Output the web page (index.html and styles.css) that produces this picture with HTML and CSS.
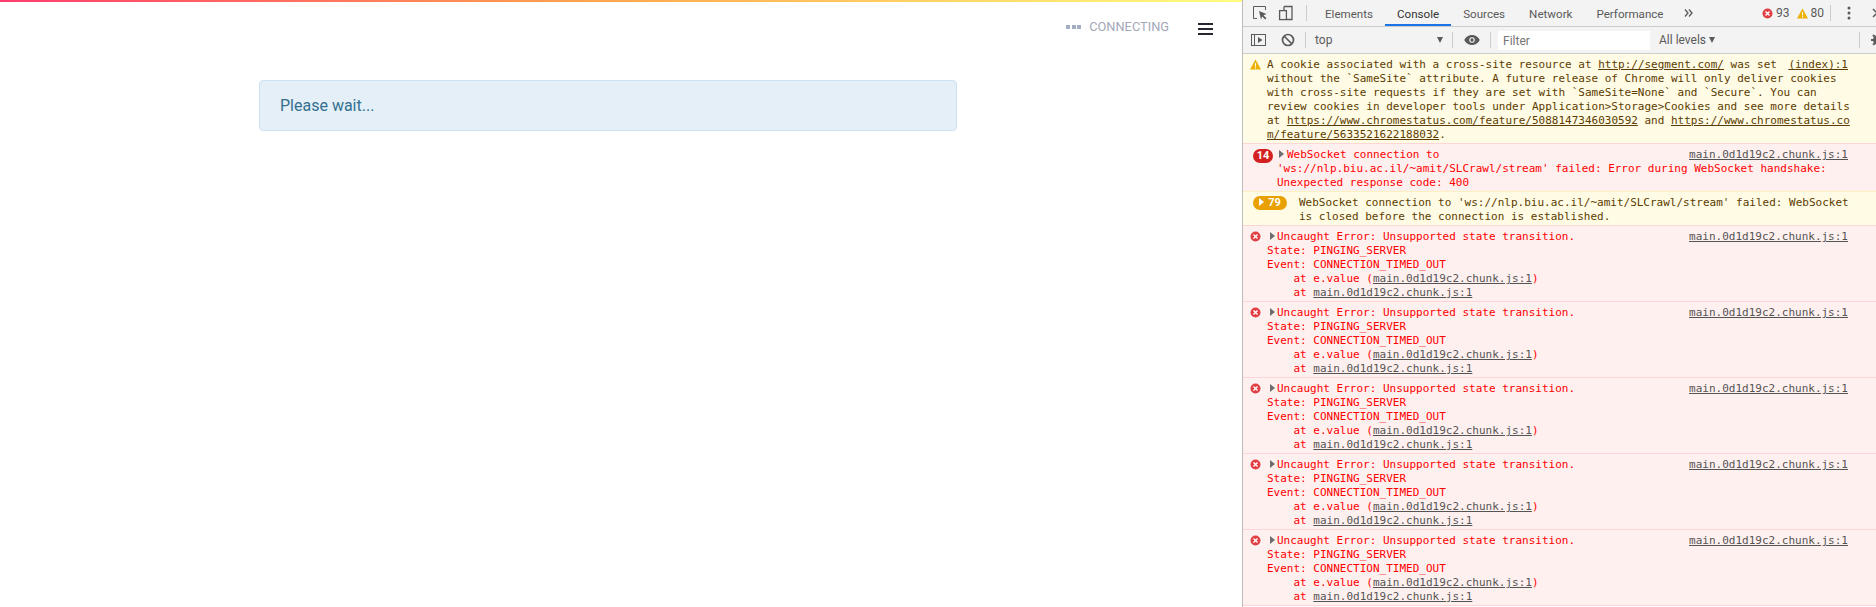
FILE: index.html
```html
<!DOCTYPE html>
<html lang="en">
<head>
<meta charset="utf-8">
<title>Connecting</title>
<link rel="stylesheet" href="styles.css">
</head>
<body>
<div class="app">
  <main class="page">
    <div class="decoration"></div>
    <header class="topbar">
      <div class="status">
        <span class="dots"><i></i><i></i><i></i></span>
        <span class="status-label">CONNECTING</span>
      </div>
      <div class="burger"><i></i><i></i><i></i></div>
    </header>
    <div class="content">
      <div class="alert">Please wait...</div>
    </div>
  </main>
  <aside class="devtools">
    <div class="tabbar">
      <svg class="tool" width="18" height="18" viewBox="0 0 18 18"><path d="M3 14V3h11v3h1V3a1 1 0 0 0-1-1H3a1 1 0 0 0-1 1v11a1 1 0 0 0 1 1h3v-1z" fill="#5a5a5a"/><path d="M8 7l7.500 3-3 1.200 3 3-1.300 1.300-3-3L10 15.500z" fill="#5a5a5a"/></svg>
      <svg class="tool" width="18" height="18" viewBox="0 0 18 18"><path d="M7 2.500h8v13H10M7 2.500V6" fill="none" stroke="#5a5a5a" stroke-width="1.300"/><rect x="2.600" y="6.600" width="6.800" height="9" fill="none" stroke="#5a5a5a" stroke-width="1.300"/></svg>
      <span class="sep sep-tabs"></span>
      <span class="tab">Elements</span>
      <span class="tab active">Console</span>
      <span class="tab">Sources</span>
      <span class="tab">Network</span>
      <span class="tab">Performance</span>
      <svg class="more" width="12" height="12" viewBox="0 0 12 12"><path d="M2 2.500l3 3.500-3 3.500M6 2.500l3 3.500-3 3.500" fill="none" stroke="#5a5a5a" stroke-width="1.300"/></svg>
      <div class="counts">
        <svg width="11" height="11" viewBox="0 0 11 11"><circle cx="5.500" cy="5.500" r="5" fill="#e23f45"/><path d="M3.500 3.500l4 4M7.500 3.500l-4 4" stroke="#fff" stroke-width="1.400"/></svg>
        <span class="count">93</span>
        <svg width="11" height="11" viewBox="0 0 11 11"><path d="M5.500 .5L11 10.500H0z" fill="#eeb000"/><path d="M5.500 4v3.500M5.500 8.200v1.300" stroke="#fff" stroke-width="1.100"/></svg>
        <span class="count">80</span>
      </div>
      <span class="sep sep-menu"></span>
      <svg class="kebab" width="4" height="14" viewBox="0 0 4 14"><circle cx="2" cy="2" r="1.500" fill="#5a5a5a"/><circle cx="2" cy="7" r="1.500" fill="#5a5a5a"/><circle cx="2" cy="12" r="1.500" fill="#5a5a5a"/></svg>
      <svg class="close" width="10" height="10" viewBox="0 0 10 10"><path d="M1 1l8 8M9 1l-8 8" stroke="#5a5a5a" stroke-width="1.500"/></svg>
    </div>
    <div class="toolbar">
      <svg class="tool" width="16" height="14" viewBox="0 0 16 14"><rect x=".5" y="1.500" width="14" height="11" fill="none" stroke="#5a5a5a"/><path d="M3.500 1.500v11" stroke="#5a5a5a"/><path d="M7 4l4.500 3L7 10z" fill="#5a5a5a"/></svg>
      <svg class="tool block" width="14" height="14" viewBox="0 0 14 14"><circle cx="7" cy="7" r="5.500" fill="none" stroke="#5a5a5a" stroke-width="1.700"/><path d="M3 3l8 8" stroke="#5a5a5a" stroke-width="1.700"/></svg>
      <span class="sep"></span>
      <div class="context"><span>top</span><span class="caret"></span></div>
      <span class="sep"></span>
      <svg class="eye" width="16" height="12" viewBox="0 0 16 12"><path d="M8 1C4.500 1 1.500 3.200 .3 6c1.200 2.800 4.200 5 7.700 5s6.500-2.200 7.700-5C14.500 3.200 11.500 1 8 1z" fill="#5a5a5a"/><circle cx="8" cy="6" r="2.800" fill="#f3f3f3"/><circle cx="8" cy="6" r="1.700" fill="#5a5a5a"/></svg>
      <span class="sep"></span>
      <div class="filter">Filter</div>
      <div class="levels"><span>All levels</span><span class="caret"></span></div>
      <span class="sep sep-gear"></span>
      <svg class="gear" width="14" height="14" viewBox="0 0 14 14"><circle cx="7" cy="7" r="3.500" fill="none" stroke="#5a5a5a" stroke-width="3"/><path d="M7 0v14M0 7h14M2 2l10 10M12 2L2 12" stroke="#5a5a5a" stroke-width="2" stroke-dasharray="2.500 9 2.500"/></svg>
    </div>
    <div class="console">
      <div class="msg warn cookie">
        <svg class="msg-icon" width="11" height="11" viewBox="0 0 11 11"><path d="M5.500 .5L11 10.500H0z" fill="#eeb000"/><path d="M5.500 4v3.500M5.500 8.200v1.300" stroke="#fff" stroke-width="1.100"/></svg>
        <a class="source">(index):1</a>
        <div class="body">A cookie associated with a cross-site resource at <a>http://segment.com/</a> was set<br>without the `SameSite` attribute. A future release of Chrome will only deliver cookies<br>with cross-site requests if they are set with `SameSite=None` and `Secure`. You can<br>review cookies in developer tools under Application&gt;Storage&gt;Cookies and see more details<br>at <a>https://www.chromestatus.com/feature/5088147346030592</a> and <a>https://www.chromestatus.co<br>m/feature/5633521622188032</a>.</div>
      </div>
      <div class="msg error socket">
        <span class="badge badge-red">14</span>
        <a class="source">main.0d1d19c2.chunk.js:1</a>
        <div class="body indent-socket"><span class="tri tri-socket"></span>WebSocket connection to<br>'ws://nlp.biu.ac.il/~amit/SLCrawl/stream' failed: Error during WebSocket handshake:<br>Unexpected response code: 400</div>
      </div>
      <div class="msg warn socket-warn">
        <span class="badge badge-amber"><span class="tri tri-white"></span>79</span>
        <div class="body indent-warn">WebSocket connection to 'ws://nlp.biu.ac.il/~amit/SLCrawl/stream' failed: WebSocket<br>is closed before the connection is established.</div>
      </div>
      <div class="msg error uncaught">
        <svg class="msg-icon" width="11" height="11" viewBox="0 0 11 11"><circle cx="5.500" cy="5.500" r="5" fill="#e23f45"/><path d="M3.500 3.500l4 4M7.500 3.500l-4 4" stroke="#fff" stroke-width="1.400"/></svg>
        <a class="source">main.0d1d19c2.chunk.js:1</a>
        <div class="body"><span class="tri tri-first"></span>Uncaught Error: Unsupported state transition.<br>State: PINGING_SERVER<br>Event: CONNECTION_TIMED_OUT<br>&nbsp;&nbsp;&nbsp;&nbsp;at e.value (<a>main.0d1d19c2.chunk.js:1</a>)<br>&nbsp;&nbsp;&nbsp;&nbsp;at <a>main.0d1d19c2.chunk.js:1</a></div>
      </div>
      <div class="msg error uncaught">
        <svg class="msg-icon" width="11" height="11" viewBox="0 0 11 11"><circle cx="5.500" cy="5.500" r="5" fill="#e23f45"/><path d="M3.500 3.500l4 4M7.500 3.500l-4 4" stroke="#fff" stroke-width="1.400"/></svg>
        <a class="source">main.0d1d19c2.chunk.js:1</a>
        <div class="body"><span class="tri tri-first"></span>Uncaught Error: Unsupported state transition.<br>State: PINGING_SERVER<br>Event: CONNECTION_TIMED_OUT<br>&nbsp;&nbsp;&nbsp;&nbsp;at e.value (<a>main.0d1d19c2.chunk.js:1</a>)<br>&nbsp;&nbsp;&nbsp;&nbsp;at <a>main.0d1d19c2.chunk.js:1</a></div>
      </div>
      <div class="msg error uncaught">
        <svg class="msg-icon" width="11" height="11" viewBox="0 0 11 11"><circle cx="5.500" cy="5.500" r="5" fill="#e23f45"/><path d="M3.500 3.500l4 4M7.500 3.500l-4 4" stroke="#fff" stroke-width="1.400"/></svg>
        <a class="source">main.0d1d19c2.chunk.js:1</a>
        <div class="body"><span class="tri tri-first"></span>Uncaught Error: Unsupported state transition.<br>State: PINGING_SERVER<br>Event: CONNECTION_TIMED_OUT<br>&nbsp;&nbsp;&nbsp;&nbsp;at e.value (<a>main.0d1d19c2.chunk.js:1</a>)<br>&nbsp;&nbsp;&nbsp;&nbsp;at <a>main.0d1d19c2.chunk.js:1</a></div>
      </div>
      <div class="msg error uncaught">
        <svg class="msg-icon" width="11" height="11" viewBox="0 0 11 11"><circle cx="5.500" cy="5.500" r="5" fill="#e23f45"/><path d="M3.500 3.500l4 4M7.500 3.500l-4 4" stroke="#fff" stroke-width="1.400"/></svg>
        <a class="source">main.0d1d19c2.chunk.js:1</a>
        <div class="body"><span class="tri tri-first"></span>Uncaught Error: Unsupported state transition.<br>State: PINGING_SERVER<br>Event: CONNECTION_TIMED_OUT<br>&nbsp;&nbsp;&nbsp;&nbsp;at e.value (<a>main.0d1d19c2.chunk.js:1</a>)<br>&nbsp;&nbsp;&nbsp;&nbsp;at <a>main.0d1d19c2.chunk.js:1</a></div>
      </div>
      <div class="msg error uncaught">
        <svg class="msg-icon" width="11" height="11" viewBox="0 0 11 11"><circle cx="5.500" cy="5.500" r="5" fill="#e23f45"/><path d="M3.500 3.500l4 4M7.500 3.500l-4 4" stroke="#fff" stroke-width="1.400"/></svg>
        <a class="source">main.0d1d19c2.chunk.js:1</a>
        <div class="body"><span class="tri tri-first"></span>Uncaught Error: Unsupported state transition.<br>State: PINGING_SERVER<br>Event: CONNECTION_TIMED_OUT<br>&nbsp;&nbsp;&nbsp;&nbsp;at e.value (<a>main.0d1d19c2.chunk.js:1</a>)<br>&nbsp;&nbsp;&nbsp;&nbsp;at <a>main.0d1d19c2.chunk.js:1</a></div>
      </div>
    </div>
  </aside>
</div>
</body>
</html>
```

FILE: styles.css
```css
* { box-sizing: border-box; }
html, body { margin: 0; height: 100%; overflow: hidden; background: #fff; }
.app { display: flex; height: 607px; }

.page { flex: 1 1 auto; min-width: 0; display: flex; flex-direction: column; background: #fff; }
.decoration { height: 2px; background: linear-gradient(90deg, #ff3c6e, #ffa94d 50%, #fffd80); }
.topbar { height: 54px; display: flex; align-items: center; justify-content: flex-end; padding-right: 29px; }
.status { display: flex; align-items: center; gap: 8px; margin: 0 29px 4px 0; }
.dots { display: flex; gap: 1.500px; }
.dots i { width: 4px; height: 4px; background: #a3aec4; display: block; }
.status-label { font: 12.800px/16px "Roboto", "Liberation Sans", sans-serif; color: #a3a8b8; }
.burger { display: flex; flex-direction: column; gap: 3px; width: 15px; }
.burger i { display: block; height: 2px; background: #262730; }
.content { padding: 0 0 0 259px; margin-top: 24px; }
.alert { width: 698px; height: 51px; padding: 0 20px; display: flex; align-items: center; background: #e4eff8; border: 1px solid #cfe2f3; border-radius: 4px; color: #33708f; font: 16px/24px "Roboto", "Liberation Sans", sans-serif; }

.devtools { flex: 0 0 634px; display: flex; flex-direction: column; border-left: 1px solid #bdbdbd; background: #fff; overflow: hidden; font-family: "Roboto", "Open Sans", sans-serif; }

.tabbar { flex: 0 0 27px; display: flex; align-items: center; background: #f3f3f3; border-bottom: 1px solid #ccc; padding-left: 8px; font-size: 12px; color: #5a5a5a; white-space: nowrap; }
.tabbar .tool { margin-right: 8px; flex: none; }
.sep { width: 1px; height: 16px; background: #ccc; flex: none; }
.sep-tabs { margin: 0 6px 0 3px; }
.tab { height: 26px; padding: 1px 12px 0; line-height: 27px; flex: none; font-size: 11.600px; }
.tab.active { color: #333; border-bottom: 2px solid #1a73e8; }
.more { margin-left: 7px; flex: none; }
.counts { margin-left: auto; display: flex; align-items: center; gap: 3px; font-size: 12px; }
.count { margin-right: 4px; }
.sep-menu { margin: 0 16px 0 2px; }
.kebab { flex: none; margin-right: 21px; }
.close { flex: none; margin-right: -6px; }

.toolbar { flex: 0 0 27px; display: flex; align-items: center; background: #f3f3f3; border-bottom: 1px solid #ccc; padding-left: 8px; font-size: 12px; color: #5a5a5a; }
.toolbar .tool { margin-right: 14px; flex: none; }
.toolbar .block { margin-right: 10px; }
.context { width: 146px; padding: 0 9px; display: flex; justify-content: space-between; align-items: center; flex: none; }
.caret { width: 0; height: 0; border-left: 3.500px solid transparent; border-right: 3.500px solid transparent; border-top: 6px solid #5a5a5a; display: block; }
.eye { margin: 0 10px 0 11px; flex: none; }
.filter { width: 152px; height: 19px; margin-left: 7px; padding-left: 5px; background: #fff; color: #757575; line-height: 20px; flex: none; }
.levels { margin-left: 9px; width: 56px; display: flex; align-items: center; justify-content: space-between; flex: none; }
.sep-gear { margin-left: 144px; }
.gear { flex: none; margin-left: 11px; }

.console { flex: 1 1 auto; overflow: hidden; font: 11px/14px "DejaVu Sans Mono", monospace; }
.msg { position: relative; padding: 4px 28px 3px 24px; border-bottom: 1px solid #ffd6d6; white-space: nowrap; }
.msg a { text-decoration: underline; color: #545454; }
.warn { background: #fffbe5; color: #5c3c00; }
.msg.warn a { color: #5c3c00; }
.error { background: #fff0f0; color: #f00; }
.cookie { height: 90px; }
.socket { height: 48px; border-bottom-color: #fff0c0; }
.socket-warn { height: 34px; }
.uncaught { height: 76px; }
.source { float: right; }
.msg-icon { position: absolute; left: 7px; top: 5px; }
.tri { display: inline-block; width: 0; height: 0; border-top: 4px solid transparent; border-bottom: 4px solid transparent; border-left: 5px solid #6e6e6e; margin-right: 2px; }
.tri-first { margin-left: 3px; }
.tri-socket { margin-left: 2px; margin-right: 3px; }
.indent-socket { padding-left: 10px; }
.indent-warn { padding-left: 32px; }
.badge { position: absolute; top: 5px; left: 10px; height: 14px; border-radius: 7px; color: #fff; font: bold 11px/14px "Roboto", sans-serif; text-align: center; }
.badge-red { width: 20px; background: #d32020; }
.badge-amber { top: 4px; width: 34px; background: #e8a100; }
.tri-white { border-left-color: #fff; margin-right: 4px; }
```
